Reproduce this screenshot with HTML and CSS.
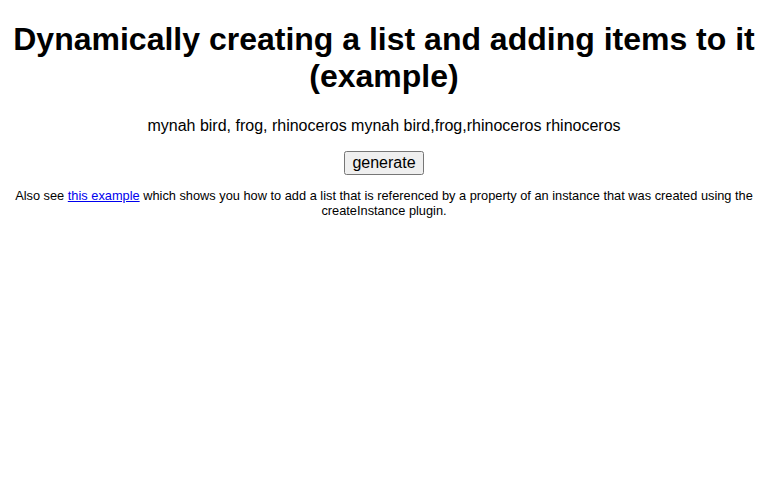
FILE: index.html
```html
<!DOCTYPE html>
<html lang="en">
<head>
    <meta charset="UTF-8">
    <meta name="viewport" content="width=device-width, initial-scale=1.0">
    <title>Dynamically creating a list and adding items to it (example)</title>
    <link rel="stylesheet" href="styles.css">
</head>
<body>
    <h1>Dynamically creating a list and adding items to it (example)</h1>

    <p id="output">mynah bird, frog, rhinoceros mynah bird,frog,rhinoceros rhinoceros</p>

    <div class="actions"><button type="button" onclick="generate()">generate</button></div>

    <p class="note">Also see <a href="#">this example</a> which shows you how to add a list that is referenced by a property of an instance that was created using the createInstance plugin.</p>

    <script>
        function generate() {
            const animals = [];
            animals.push('mynah bird');
            animals.push('frog');
            animals.push('rhinoceros');
            document.getElementById('output').innerText =
                animals.join(', ') + ' ' + animals.join(',') + ' ' + animals[animals.length - 1];
        }
    </script>
</body>
</html>
```

FILE: styles.css
```css
body {
    font-family: "Liberation Sans", Arial, sans-serif;
    text-align: center;
    margin: 0 8px;
}
h1 {
    font-size: 32px;
    margin: 21px 0 22px;
}
p {
    font-size: 16px;
    margin: 16px 0;
}
.actions {
    margin: 16px 0 13px;
}
button {
    font-family: "Liberation Sans", Arial, sans-serif;
    font-size: 16px;
}
.note {
    font-size: 12.8px;
    margin: 13px 0;
}
```
